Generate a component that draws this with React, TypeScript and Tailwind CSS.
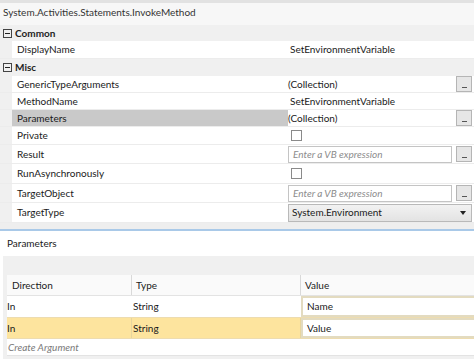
import React from "react";

type Prop = {
  name: string;
  kind: "text" | "collection" | "check" | "expr" | "select";
  value?: string;
  h: string;
  selected?: boolean;
};

const misc: Prop[] = [
  { name: "GenericTypeArguments", kind: "collection", value: "(Collection)", h: "h-[17px]" },
  { name: "MethodName", kind: "text", value: "SetEnvironmentVariable", h: "h-[17px]" },
  { name: "Parameters", kind: "collection", value: "(Collection)", h: "h-[17px]", selected: true },
  { name: "Private", kind: "check", h: "h-[18px]" },
  { name: "Result", kind: "expr", h: "h-[19px]" },
  { name: "RunAsynchronously", kind: "check", h: "h-[20px]" },
  { name: "TargetObject", kind: "expr", h: "h-[19px]" },
  { name: "TargetType", kind: "select", value: "System.Environment", h: "h-[20px]" },
];

const font = { fontFamily: 'Lato, "Open Sans", sans-serif' };

function DotsButton() {
  return (
    <div className="w-[16px] h-[16px] mr-[2px] border border-[#b5b5b5] bg-[#e6e6e6] flex items-end justify-center pb-[3px]">
      <div className="w-[5px] h-px bg-[#555]" />
    </div>
  );
}

function Category({ title, h }: { title: string; h: string }) {
  return (
    <div className={`flex items-center ${h} bg-[#f0f0f0]`}>
      <div className="w-[9px] h-[9px] ml-[3px] border border-[#444] flex items-center justify-center">
        <div className="w-[5px] h-px bg-[#222]" />
      </div>
      <span className="ml-[3px] font-bold text-[10px] text-[#1e1e1e]">{title}</span>
    </div>
  );
}

function ValueCell({ p }: { p: Prop }) {
  if (p.kind === "text") {
    return <span className="pl-[2px] text-[10px] text-[#1a1a1a]">{p.value}</span>;
  }
  if (p.kind === "collection") {
    return (
      <div className="flex items-center justify-between w-full">
        <span className="text-[10px] text-[#1a1a1a]">{p.value}</span>
        <DotsButton />
      </div>
    );
  }
  if (p.kind === "check") {
    return <div className="ml-[3px] w-[11px] h-[11px] border border-[#8a8a8a] bg-white" />;
  }
  if (p.kind === "expr") {
    return (
      <div className="flex items-center w-full gap-[4px]">
        <div className="flex-1 h-[17px] border border-[#c4c4c4] bg-white flex items-center pl-[4px]">
          <span className="italic text-[10px] text-[#8c8c8c]">Enter a VB expression</span>
        </div>
        <DotsButton />
      </div>
    );
  }
  return (
    <div className="flex items-center justify-between w-full h-[18px] mr-[2px] border border-[#b9b9b9] bg-gradient-to-b from-[#f2f2f2] to-[#e3e3e3] px-[3px]">
      <span className="text-[10px] text-[#1a1a1a]">{p.value}</span>
      <svg width="6" height="4" viewBox="0 0 6 4" className="mr-[2px]">
        <polygon points="0,0 6,0 3,4" fill="#222" />
      </svg>
    </div>
  );
}

function PropRow({ p }: { p: Prop }) {
  return (
    <div className={`flex ${p.h} border-b border-[#ececec] bg-[#f0f0f0]`}>
      <div className="w-[12px]" />
      <div
        className={`w-[276px] flex items-center pl-[5px] text-[10px] text-[#1a1a1a] ${
          p.selected ? "bg-[#c9c9c9]" : "bg-white"
        }`}
      >
        {p.name}
      </div>
      <div className="flex-1 flex items-center bg-white">
        <ValueCell p={p} />
      </div>
    </div>
  );
}

export default function App() {
  return (
    <div className="w-[474px] h-[359px] overflow-hidden bg-white" style={font}>
      {/* property grid */}
      <div className="bg-[#f0f0f0]">
        <div className="h-[3px] bg-[#e2e2e2]" />
        <div className="h-[22px] flex items-center pl-[3px] pb-[3px] bg-[#f7f7f7] text-[10px] text-[#333]">
          System.Activities.Statements.InvokeMethod
        </div>
        <Category title="Common" h="h-[16px]" />
        <PropRow p={{ name: "DisplayName", kind: "text", value: "SetEnvironmentVariable", h: "h-[18px]" }} />
        <Category title="Misc" h="h-[17px]" />
        {misc.map((p) => (
          <PropRow key={p.name} p={p} />
        ))}
        <div className="h-[6px] bg-[#eeeeee]" />
        <div className="h-[2px] bg-[#a9c9e8]" />
      </div>

      {/* arguments panel */}
      <div className="h-[25px] flex items-center pl-[7px] text-[10px] text-[#1a1a1a]">Parameters</div>
      <div className="ml-[3px] bg-[#f0f0f0] h-[103px]">
        <div className="h-[19px]" />
        <div className="ml-[4px] bg-white">
          <div className="flex h-[21px] bg-[#fafafa] border-b border-[#e3e3e3] text-[10px] text-[#1a1a1a]">
            <div className="w-[125px] flex items-center pl-[5px] border-r border-[#d9d9d9]">Direction</div>
            <div className="w-[169px] flex items-center pl-[4px] border-r border-[#d9d9d9]">Type</div>
            <div className="flex-1 flex items-center pl-[4px]">Value</div>
          </div>
          <div className="flex h-[21px] bg-white text-[10px] text-[#1a1a1a]">
            <div className="w-[125px] flex items-center">In</div>
            <div className="w-[169px] flex items-center pl-[1px]">String</div>
            <div className="flex-1 flex items-center pl-[4px] border-2 border-r-0 border-[#e3dbc0]">Name</div>
          </div>
          <div className="flex h-[22px] bg-[#fde49e] border-y border-[#eddcb0] text-[10px] text-[#1a1a1a]">
            <div className="w-[125px] flex items-center border-r border-[#e8d59e]">In</div>
            <div className="w-[169px] flex items-center pl-[1px] border-r border-[#e8d59e]">String</div>
            <div className="flex-1 flex items-center pl-[4px] bg-white border-2 border-r-0 border-[#e3dbc0]">Value</div>
          </div>
          <div className="h-[17px] flex items-center pl-[1px] border-b border-[#e3e3e3] bg-white italic text-[10px] text-[#7a7a7a]">
            Create Argument
          </div>
        </div>
      </div>
    </div>
  );
}
